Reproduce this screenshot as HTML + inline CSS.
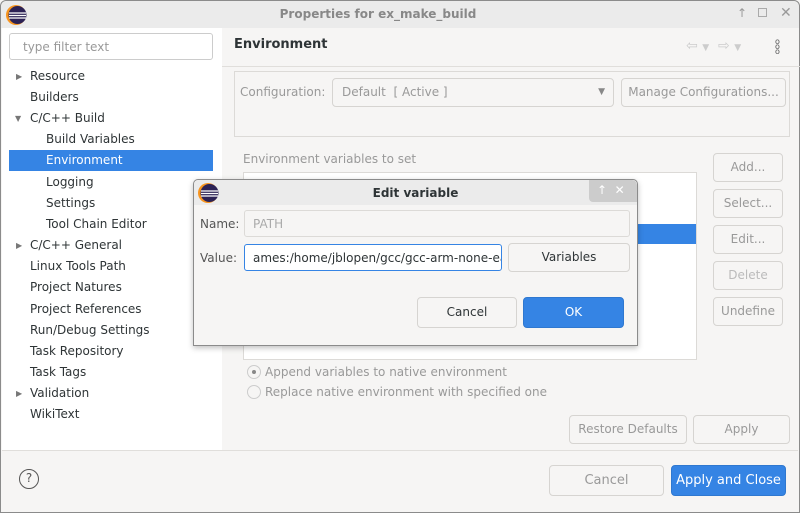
<!DOCTYPE html><html><head><style>
*{box-sizing:border-box}
body{margin:0;width:800px;height:513px;overflow:hidden;font-family:"DejaVu Sans","Liberation Sans",sans-serif;font-size:12px;color:#2e3436;background:#f6f5f4;position:relative}
.a{position:absolute}
.btn{position:absolute;border:1px solid #d6d4d1;border-radius:4px;background:#f6f5f4;color:#999;text-align:center;font-size:12px;white-space:nowrap}
.tree div{position:absolute;height:21px;line-height:21px}
.tri{font-size:8px;color:#777}
</style></head><body>
<div class="a" style="left:0;top:0;width:800px;height:513px;border:1px solid #8b8b8b;border-radius:6px 6px 0 0"></div>
<div class="a" style="left:1px;top:1px;width:798px;height:27px;background:#ebebeb;border-radius:6px 6px 0 0"></div>
<svg class="a" style="left:5px;top:4px" width="22" height="22"><circle cx="11" cy="11" r="10" fill="#f7941e"/><circle cx="12.5" cy="11" r="9" fill="#2c2255"/><g stroke="#fff" stroke-width="1.2"><line x1="4" y1="9" x2="21" y2="9"/><line x1="4" y1="11.5" x2="21" y2="11.5"/><line x1="4" y1="14" x2="21" y2="14"/></g></svg>
<div class="a" style="left:0;top:7px;width:756px;text-align:center;font-weight:bold;color:#888">Properties for ex_make_build</div>
<div class="a" style="left:737px;top:6px;color:#999;font-size:12px">↑</div>
<div class="a" style="left:758px;top:8px;width:9px;height:9px;border:1px solid #aaa"></div>
<div class="a" style="left:780px;top:5px;color:#999;font-size:14px">✕</div>
<div class="a" style="left:2px;top:28px;width:220px;height:422px;background:#fff"></div>
<div class="a" style="left:9px;top:33px;width:204px;height:27px;border:1px solid #ccc;border-radius:3px;padding:6px 13px;color:#999">type filter text</div>
<div class="tree">
<div style="left:9px;top:150px;width:204px;background:#3584e4"></div>
<div class="tri" style="left:16px;top:66px">▶</div><div style="left:30px;top:66px">Resource</div>
<div style="left:30px;top:87px">Builders</div>
<div class="tri" style="left:15px;top:108px">▼</div><div style="left:30px;top:108px">C/C++ Build</div>
<div style="left:46px;top:129px">Build Variables</div>
<div style="left:46px;top:150px;color:#fff">Environment</div>
<div style="left:46px;top:172px">Logging</div>
<div style="left:46px;top:193px">Settings</div>
<div style="left:46px;top:214px">Tool Chain Editor</div>
<div class="tri" style="left:16px;top:235px">▶</div><div style="left:30px;top:235px">C/C++ General</div>
<div style="left:30px;top:256px">Linux Tools Path</div>
<div style="left:30px;top:277px">Project Natures</div>
<div style="left:30px;top:299px">Project References</div>
<div style="left:30px;top:320px">Run/Debug Settings</div>
<div style="left:30px;top:341px">Task Repository</div>
<div style="left:30px;top:362px">Task Tags</div>
<div class="tri" style="left:16px;top:383px">▶</div><div style="left:30px;top:383px">Validation</div>
<div style="left:30px;top:404px">WikiText</div>
</div>
<div class="a" style="left:234px;top:37px;font-weight:bold;font-size:13px">Environment</div>
<div class="a" style="left:686px;top:38px;color:#ccc;font-size:14px">⇦ <span style="font-size:9px">▼</span> &nbsp;⇨ <span style="font-size:9px">▼</span></div>
<div class="a" style="left:775px;top:39px;color:#555;font-size:8px;line-height:5px">o<br>o<br>o</div>
<div class="a" style="left:222px;top:66px;width:578px;border-top:1px solid #e0dedb"></div>
<div class="a" style="left:234px;top:71px;width:556px;height:66px;border:1px solid #dcdad7"></div>
<div class="a" style="left:240px;top:85px;color:#999">Configuration:</div>
<div class="btn" style="left:332px;top:78px;width:282px;height:29px;text-align:left;padding:6px 9px">Default &nbsp;[ Active ]<span style="position:absolute;right:8px;top:8px;font-size:9px;color:#888">▼</span></div>
<div class="btn" style="left:621px;top:78px;width:165px;height:29px;line-height:27px">Manage Configurations...</div>
<div class="a" style="left:243px;top:152px;color:#999">Environment variables to set</div>
<div class="a" style="left:243px;top:172px;width:454px;height:188px;background:#fff;border:1px solid #dcdad7"></div>
<div class="a" style="left:637px;top:224px;width:59px;height:20px;background:#3584e4"></div>
<div class="btn" style="left:713px;top:153px;width:70px;height:29px;line-height:27px">Add...</div>
<div class="btn" style="left:713px;top:189px;width:70px;height:29px;line-height:27px">Select...</div>
<div class="btn" style="left:713px;top:225px;width:70px;height:29px;line-height:27px">Edit...</div>
<div class="btn" style="left:713px;top:261px;width:70px;height:29px;line-height:27px;color:#bbb">Delete</div>
<div class="btn" style="left:713px;top:297px;width:70px;height:29px;line-height:27px">Undefine</div>
<div class="a" style="left:247px;top:365px;width:14px;height:14px;border:1px solid #ccc;border-radius:50%"><div style="margin:4px;width:4px;height:4px;border-radius:50%;background:#888"></div></div>
<div class="a" style="left:265px;top:365px;color:#999">Append variables to native environment</div>
<div class="a" style="left:247px;top:385px;width:14px;height:14px;border:1px solid #ccc;border-radius:50%"></div>
<div class="a" style="left:265px;top:385px;color:#999">Replace native environment with specified one</div>
<div class="btn" style="left:569px;top:415px;width:118px;height:29px;line-height:27px">Restore Defaults</div>
<div class="btn" style="left:693px;top:415px;width:97px;height:29px;line-height:27px">Apply</div>
<div class="a" style="left:2px;top:450px;width:796px;border-top:1px solid #e0dedb"></div>
<div class="a" style="left:19px;top:469px;width:20px;height:20px;border:1.5px solid #555;border-radius:50%;text-align:center;line-height:17px;font-size:12px;color:#555">?</div>
<div class="btn" style="left:549px;top:465px;width:115px;height:31px;line-height:29px;font-size:13px">Cancel</div>
<div class="btn" style="left:671px;top:465px;width:115px;height:31px;line-height:29px;background:#3584e4;border-color:#2f78d0;color:#fff;font-size:13px">Apply and Close</div>
<!-- dialog -->
<div class="a" style="left:193px;top:179px;width:445px;height:167px;background:#f6f5f4;border:1px solid #8b8b8b;border-radius:5px 5px 0 0;box-shadow:0 2px 6px rgba(0,0,0,.25)"></div>
<div class="a" style="left:194px;top:180px;width:443px;height:25px;background:#ebebeb;border-radius:5px 5px 0 0"></div>
<svg class="a" style="left:197px;top:182px" width="22" height="22"><circle cx="11" cy="11" r="10" fill="#f7941e"/><circle cx="12.5" cy="11" r="9" fill="#2c2255"/><g stroke="#fff" stroke-width="1.2"><line x1="4" y1="9" x2="21" y2="9"/><line x1="4" y1="11.5" x2="21" y2="11.5"/><line x1="4" y1="14" x2="21" y2="14"/></g></svg>
<div class="a" style="left:193px;top:186px;width:445px;text-align:center;font-weight:bold;font-size:12px">Edit variable</div>
<div class="a" style="left:589px;top:180px;width:48px;height:22px;background:#ccc;border-radius:0 5px 0 4px;color:#fff;font-size:12px;padding:3px 8px">↑ &nbsp;✕</div>
<div class="a" style="left:200px;top:217px;color:#555">Name:</div>
<div class="a" style="left:244px;top:210px;width:386px;height:27px;border:1px solid #dcdad7;border-radius:3px;padding:6px 8px;color:#aaa">PATH</div>
<div class="a" style="left:200px;top:251px;color:#555">Value:</div>
<div class="a" style="left:244px;top:244px;width:258px;height:27px;border:1px solid #3584e4;border-radius:3px;background:#fff;padding:6px 8px;white-space:nowrap;overflow:hidden">ames:/home/jblopen/gcc/gcc-arm-none-eabi</div>
<div class="btn" style="left:508px;top:243px;width:122px;height:29px;line-height:27px;color:#2e3436">Variables</div>
<div class="btn" style="left:417px;top:297px;width:100px;height:31px;line-height:29px;color:#2e3436">Cancel</div>
<div class="btn" style="left:523px;top:297px;width:101px;height:31px;line-height:29px;background:#3584e4;border-color:#2f78d0;color:#fff">OK</div>
</body></html>
